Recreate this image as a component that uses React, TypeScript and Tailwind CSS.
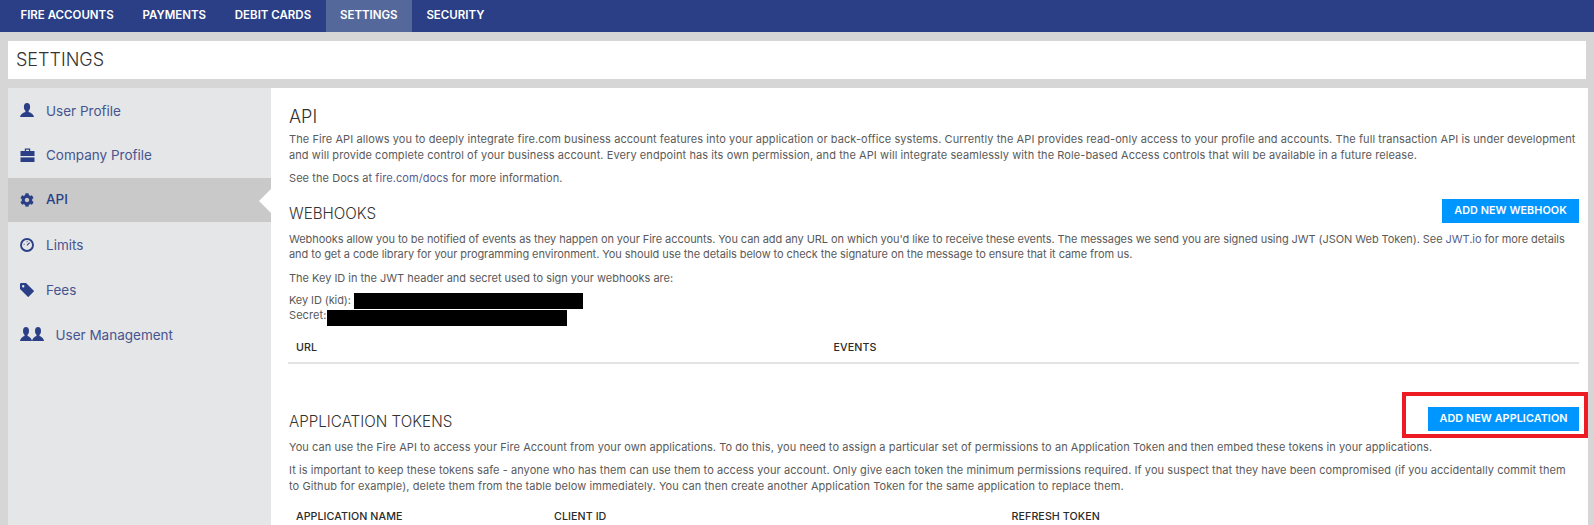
import { FaCog } from "react-icons/fa"
import type { ReactNode } from "react"

const navItems = ["FIRE ACCOUNTS", "PAYMENTS", "DEBIT CARDS", "SETTINGS", "SECURITY"]

function UserIcon() {
  return (
    <svg width="14" height="14" viewBox="0 0 14 14" fill="currentColor">
      <ellipse cx="7" cy="3.9" rx="3.1" ry="3.9" />
      <path d="M5.4 7h3.2v2q4.6 1.3 5.4 5H0q.8-3.7 5.4-5z" />
    </svg>
  )
}

function BriefcaseIcon() {
  return (
    <svg width="15" height="14" viewBox="0 0 15 14" fill="currentColor">
      <path d="M4.8 3V.6h5.4V3H9V1.7H6V3z" />
      <path d="M.5 3h14v5H.5z" />
      <path d="M.5 9.4h14V14H.5z" />
    </svg>
  )
}

function GaugeIcon() {
  return (
    <svg width="14" height="14" viewBox="0 0 14 14" fill="none" stroke="currentColor">
      <circle cx="7" cy="7" r="6" strokeWidth="1.9" />
      <path d="M7 7.4 9.6 4.6M3.6 6.2h1M6.6 3.7h1" strokeWidth="1.1" />
    </svg>
  )
}

function TagIcon() {
  return (
    <svg width="14" height="14" viewBox="0 0 14 14" fill="currentColor">
      <path
        fillRule="evenodd"
        d="M0 1.2Q0 0 1.2 0H6l7.8 7.8q.4.4 0 .8l-5.2 5.2q-.4.4-.8 0L0 6zM3.2 2a1.2 1.2 0 1 0 0 2.4 1.2 1.2 0 0 0 0-2.4z"
      />
    </svg>
  )
}

function UsersIcon() {
  return (
    <svg width="24" height="14" viewBox="0 0 24 14" fill="currentColor">
      <ellipse cx="6" cy="3.9" rx="3" ry="3.9" />
      <path d="M4.5 7h3v2q3.8 1.3 4.5 5H0q.7-3.7 4.5-5z" />
      <ellipse cx="18" cy="3.9" rx="3" ry="3.9" />
      <path d="M16.5 7h3v2q3.8 1.3 4.5 5H12q.7-3.7 4.5-5z" />
    </svg>
  )
}

const sideItems: { label: string; icon: ReactNode; wide?: boolean }[] = [
  { label: "User Profile", icon: <UserIcon /> },
  { label: "Company Profile", icon: <BriefcaseIcon /> },
  { label: "API", icon: <FaCog size={14} /> },
  { label: "Limits", icon: <GaugeIcon /> },
  { label: "Fees", icon: <TagIcon /> },
  { label: "User Management", icon: <UsersIcon />, wide: true },
]

function AddButton({ label, width }: { label: string; width: string }) {
  return (
    <button className={`flex h-6 ${width} items-center justify-center bg-[#0096ff] text-[10.8px] font-semibold text-white`}>
      {label}
    </button>
  )
}

function Th({ label, width }: { label: string; width: string }) {
  return <div className={`${width} shrink-0 pl-[7px] text-[10.7px] font-medium text-[#2a2a2a]`}>{label}</div>
}

export default function App() {
  return (
    <div className="relative flex h-[525px] flex-col overflow-hidden bg-[#d6d6d6] font-['Inter',sans-serif] text-[11px] leading-[15.5px] tracking-[0.07px] text-[#5a5a5a]">
      <nav className="flex h-[32px] shrink-0 bg-[#2b3f86] pl-[6px] tracking-normal">
        {navItems.map((item) => (
          <div
            key={item}
            className={`flex items-center px-[14.4px] text-[11.5px] font-semibold text-white ${item === "SETTINGS" ? "bg-[#55689b]" : ""}`}
          >
            {item}
          </div>
        ))}
      </nav>

      <div className="mx-[8px] mt-[9px] flex h-[38px] shrink-0 items-center bg-white pl-[8px] text-[18px] font-light tracking-normal text-[#333]">
        SETTINGS
      </div>

      <div className="ml-[8px] mr-[6px] mt-[9px] flex min-h-0 flex-1">
        <aside className="w-[263px] shrink-0 bg-[#e5e6e8] tracking-normal">
          {sideItems.map((item) =>
            item.label === "API" ? (
              <div key={item.label} className="relative flex h-[44.8px] items-center bg-[#c9c9c9] pl-[12px] text-[13.5px] font-medium text-[#2b3f86]">
                <span className="flex w-[26px]">{item.icon}</span>
                {item.label}
                <span className="absolute right-0 top-[11px] h-0 w-0 border-y-[12px] border-r-[12px] border-y-transparent border-r-white" />
              </div>
            ) : (
              <div key={item.label} className="flex h-[44.8px] items-center pl-[12px] text-[13.5px] text-[#47558f]">
                <span className={`flex ${item.wide ? "w-[35.5px]" : "w-[26px]"} text-[#2b3f86]`}>{item.icon}</span>
                <span className="pt-[2px]">{item.label}</span>
              </div>
            ),
          )}
        </aside>

        <main className="flex-1 overflow-hidden bg-white pl-[18px] pr-[9px] pt-[16px]">
          <h1 className="text-[18px] font-light leading-[26px] tracking-normal text-[#333]">API</h1>
          <p className="mt-[2px] tracking-[0.08px]">
            The Fire API allows you to deeply integrate fire.com business account features into your application or back-office systems. Currently the API provides read-only access to your profile and accounts. The full transaction API is under development and will provide complete control of your business account. Every endpoint has its own permission, and the API will integrate seamlessly with the Role-based Access controls that will be available in a future release.
          </p>
          <p className="mt-[8px]">
            See the Docs at <span className="text-[#55608f]">fire.com/docs</span> for more information.
          </p>

          <div className="mt-[12.5px] flex h-6 items-start justify-between">
            <h2 className="mt-[3px] text-[15.2px] font-light leading-[24px] tracking-normal text-[#333]">WEBHOOKS</h2>
            <AddButton label="ADD NEW WEBHOOK" width="w-[137px]" />
          </div>
          <p className="mt-[8.5px] tracking-[-0.07px]">
            Webhooks allow you to be notified of events as they happen on your Fire accounts. You can add any URL on which you'd like to receive these events. The messages we send you are signed using JWT (JSON Web Token). See <span className="text-[#55608f]">JWT.io</span> for more details and to get a code library for your programming environment. You should use the details below to check the signature on the message to ensure that it came from us.
          </p>
          <p className="mt-[8.5px] tracking-[-0.02px]">The Key ID in the JWT header and secret used to sign your webhooks are:</p>
          <div className="mt-[7px] flex h-[15px] items-center tracking-[-0.1px]">
            Key ID (kid):
            <span className="ml-[3px] h-[16px] w-[229px] bg-black" />
          </div>
          <div className="flex h-[15px] items-center">
            Secret:
            <span className="ml-[1px] mt-[4px] h-[16px] w-[240px] bg-black" />
          </div>

          <div className="-ml-px mt-[8px] flex h-[32px] border-b-2 border-[#e3e3e3] pl-px pt-[8px]">
            <Th label="URL" width="w-[537.6px]" />
            <Th label="EVENTS" width="w-[300px]" />
          </div>

          <div className="mt-[43px] flex h-6 items-start justify-between">
            <h2 className="mt-[3px] text-[15.2px] font-light leading-[24px] tracking-normal text-[#333]">APPLICATION TOKENS</h2>
            <AddButton label="ADD NEW APPLICATION" width="w-[151px]" />
          </div>
          <p className="mt-[9px] tracking-[0.055px]">
            You can use the Fire API to access your Fire Account from your own applications. To do this, you need to assign a particular set of permissions to an Application Token and then embed these tokens in your applications.
          </p>
          <p className="mt-[8px]">
            It is important to keep these tokens safe - anyone who has them can use them to access your account. Only give each token the minimum permissions required. If you suspect that they have been compromised (if you accidentally commit them to Github for example), delete them from the table below immediately. You can then create another Application Token for the same application to replace them.
          </p>
          <div className="mt-[14.5px] flex">
            <Th label="APPLICATION NAME" width="w-[258px]" />
            <Th label="CLIENT ID" width="w-[457.5px]" />
            <Th label="REFRESH TOKEN" width="w-[300px]" />
          </div>
        </main>
      </div>

      {/* red highlight drawn over the screenshot */}
      <div className="pointer-events-none absolute left-[1402px] top-[392px] h-[46px] w-[186px] border-[4px] border-[#ed1c24]" />
    </div>
  )
}
